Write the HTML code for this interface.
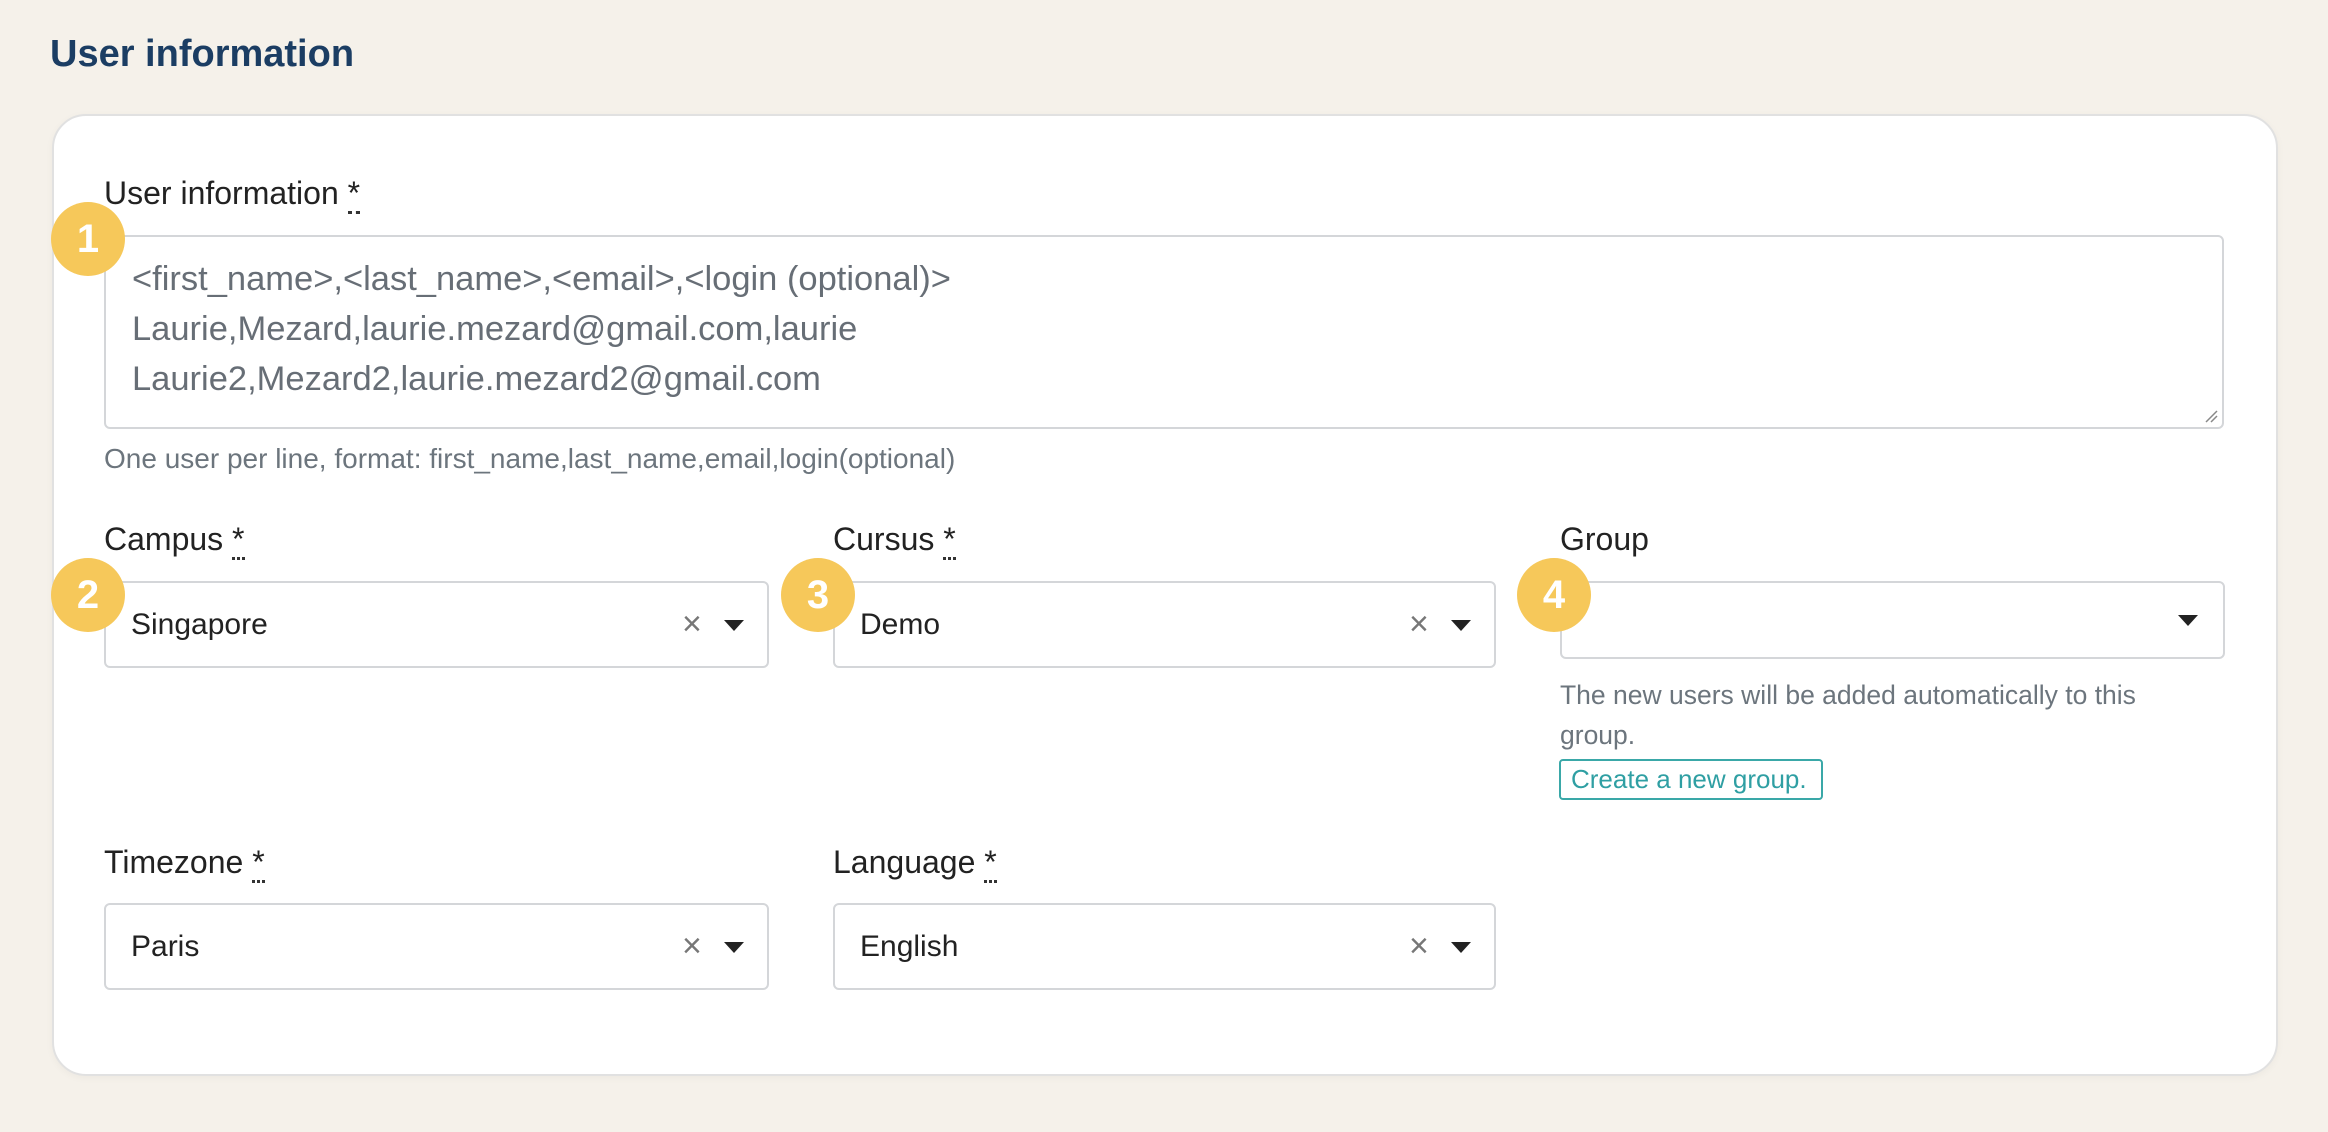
<!DOCTYPE html>
<html><head><meta charset="utf-8"><style>
*{box-sizing:border-box;margin:0;padding:0}
body{width:2328px;height:1132px;background:#f5f1ea;font-family:"Liberation Sans",Arial,sans-serif;position:relative;overflow:hidden}
.abs{position:absolute}
h1{position:absolute;left:50px;top:33px;font-size:38px;font-weight:bold;color:#1b3d63}
.card{left:52px;top:114px;width:2226px;height:962px;background:#fff;border:2px solid #e1e1e1;border-radius:34px;box-shadow:0 2px 8px rgba(0,0,0,0.04)}
.lbl{font-size:32px;color:#222;line-height:38px}
.lbl u{text-decoration:none;border-bottom:3px dotted #333}
.ta{left:104px;top:235px;width:2120px;height:194px;border:2px solid #d4d6d9;border-radius:6px;padding:17px 0 0 26px;font-size:34.5px;line-height:50px;color:#676e76}
.help{font-size:26.5px;color:#6c757d;line-height:40px}
.sel{border:2px solid #d4d6d9;border-radius:6px;height:87px;font-size:30px;color:#222;padding-left:25px;line-height:83px}
.x{position:absolute;top:0;font-size:34px;color:#777;line-height:83px}
.arr{position:absolute;top:37px;width:0;height:0;border-left:10px solid transparent;border-right:10px solid transparent;border-top:11px solid #222}
.badge{width:74px;height:74px;border-radius:50%;background:#f6c85a;color:#fff;font-size:40px;font-weight:bold;text-align:center;line-height:74px}
.link{left:1559px;top:759px;width:264px;height:41px;border:2px solid #3aa8a8;border-radius:4px;color:#2f9fa3;font-size:26px;line-height:37px;padding-left:10px;white-space:nowrap}
</style></head><body>
<h1>User information</h1>
<div class="abs card"></div>
<div class="abs lbl" style="left:104px;top:174px">User information <u>*</u></div>
<div class="abs ta">&lt;first_name&gt;,&lt;last_name&gt;,&lt;email&gt;,&lt;login (optional)&gt;<br>Laurie,Mezard,laurie.mezard@gmail.com,laurie<br>Laurie2,Mezard2,laurie.mezard2@gmail.com
<svg class="abs" style="right:4px;bottom:4px" width="14" height="14"><path d="M2 13L13 2M7 13L13 7" stroke="#888" stroke-width="1.5"/></svg></div>
<div class="abs help" style="left:104px;top:439px;font-size:28px">One user per line, format: first_name,last_name,email,login(optional)</div>

<div class="abs lbl" style="left:104px;top:520px">Campus <u>*</u></div>
<div class="abs lbl" style="left:833px;top:520px">Cursus <u>*</u></div>
<div class="abs lbl" style="left:1560px;top:520px">Group</div>

<div class="abs sel" style="left:104px;top:581px;width:665px">Singapore<span class="x" style="left:576px">×</span><span class="arr" style="left:618px"></span></div>
<div class="abs sel" style="left:833px;top:581px;width:663px">Demo<span class="x" style="left:574px">×</span><span class="arr" style="left:616px"></span></div>
<div class="abs sel" style="left:1560px;top:581px;width:665px;height:78px"><span class="arr" style="left:616px;top:32px"></span></div>
<div class="abs help" style="left:1560px;top:675px">The new users will be added automatically to this<br>group.</div>
<div class="abs link">Create a new group.</div>

<div class="abs lbl" style="left:104px;top:843px">Timezone <u>*</u></div>
<div class="abs lbl" style="left:833px;top:843px">Language <u>*</u></div>
<div class="abs sel" style="left:104px;top:903px;width:665px">Paris<span class="x" style="left:576px">×</span><span class="arr" style="left:618px"></span></div>
<div class="abs sel" style="left:833px;top:903px;width:663px">English<span class="x" style="left:574px">×</span><span class="arr" style="left:616px"></span></div>

<div class="abs badge" style="left:51px;top:202px">1</div>
<div class="abs badge" style="left:51px;top:558px">2</div>
<div class="abs badge" style="left:781px;top:558px">3</div>
<div class="abs badge" style="left:1517px;top:558px">4</div>
</body></html>
